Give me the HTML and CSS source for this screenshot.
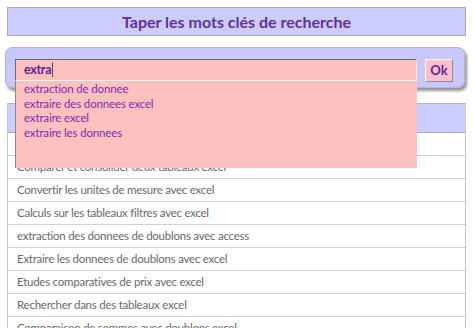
FILE: index.html
```html
<!DOCTYPE html>
<html lang="fr">
<head>
  <meta charset="UTF-8" />
  <title>Recherche</title>
  <link rel="stylesheet" href="styles.css">
</head>
<body>
  <div class="title">Taper les mots clés de recherche</div>

  <!-- Search box -->
  <div class="search">
    <div class="search-field">
      <div class="search-input">extra<span class="caret"></span></div>
      <div class="suggest">
        <div class="suggest-item">extraction de donnee</div>
        <div class="suggest-item">extraire des donnees excel</div>
        <div class="suggest-item">extraire excel</div>
        <div class="suggest-item">extraire les donnees</div>
      </div>
    </div>
    <div class="ok-btn">Ok</div>
  </div>

  <!-- Results -->
  <div class="results">
    <div class="results-head"></div>
    <div class="row"></div>
    <div class="row">Comparer et consolider deux tableaux excel</div>
    <div class="row">Convertir les unites de mesure avec excel</div>
    <div class="row">Calculs sur les tableaux filtres avec excel</div>
    <div class="row">extraction des donnees de doublons avec access</div>
    <div class="row">Extraire les donnees de doublons avec excel</div>
    <div class="row">Etudes comparatives de prix avec excel</div>
    <div class="row">Rechercher dans des tableaux excel</div>
    <div class="row">Comparaison de sommes avec doublons excel</div>
  </div>
</body>
</html>
```

FILE: styles.css
```css
body {
  margin: 0;
  padding: 7px 8px 0 7px;
  background-color: white;
  font-family: Lato, "Open Sans", sans-serif;
  overflow: hidden;
  height: 328px;
  box-sizing: border-box;
}

.title {
  height: 27px;
  line-height: 27px;
  background-color: #ccccff;
  border: 1px solid #a8a8c8;
  text-align: center;
  font-size: 16px;
  font-weight: bold;
  color: #62309a;
}

.search {
  margin: 11px 1px 0 -2px;
  height: 41px;
  box-sizing: border-box;
  padding: 11px 0 0 9px;
  display: flex;
  gap: 8px;
  background-color: #c8c8fb;
  border: 1px solid #b4b4d8;
  border-radius: 7px;
  box-shadow: 2px 3px 3px rgba(80, 80, 80, 0.6);
}

.search-field {
  position: relative;
  width: 402px;
}

.search-input {
  height: 22px;
  box-sizing: border-box;
  padding-left: 8px;
  line-height: 20px;
  background-color: #ffc0c0;
  border-top: 1px solid #6a6a6a;
  border-left: 1px solid #6a6a6a;
  border-right: 1px solid #e8e8e8;
  border-bottom: 1px solid #f4f4f4;
  font-size: 12.5px;
  letter-spacing: -0.3px;
  font-weight: bold;
  color: #5a1c96;
}

.caret {
  display: inline-block;
  width: 1px;
  height: 15px;
  margin-left: 1px;
  vertical-align: -3px;
  background-color: #555;
}

.suggest {
  position: absolute;
  top: 22px;
  left: 0;
  width: 402px;
  height: 87px;
  box-sizing: border-box;
  padding: 1px 0 0 8px;
  background-color: #ffc0c0;
  border-left: 1px solid #888;
  z-index: 2;
}

.suggest-item {
  font-size: 11.5px;
  letter-spacing: -0.15px;
  line-height: 14.7px;
  color: #7c2cae;
}

.ok-btn {
  width: 28px;
  height: 23px;
  box-sizing: border-box;
  line-height: 20px;
  text-align: center;
  background-color: #ffc0c8;
  border-top: 1px solid #f4f4f4;
  border-left: 1px solid #f4f4f4;
  border-right: 1px solid #8a8a9a;
  border-bottom: 1px solid #8a8a9a;
  font-size: 13px;
  font-weight: bold;
  color: #6420a6;
}

.results {
  margin-top: 15px;
  border-left: 1px solid #c8c8c8;
  border-right: 1px solid #c8c8c8;
}

.results-head {
  height: 28px;
  background-color: #ccccff;
  border-top: 1px solid #b0b0d0;
  border-bottom: 1px solid #a8a8c8;
}

.row {
  height: 22px;
  line-height: 22px;
  padding-left: 9px;
  border-bottom: 1px solid #cfcfcf;
  font-size: 11.5px;
  letter-spacing: -0.25px;
  color: #6a6a6a;
}
```
